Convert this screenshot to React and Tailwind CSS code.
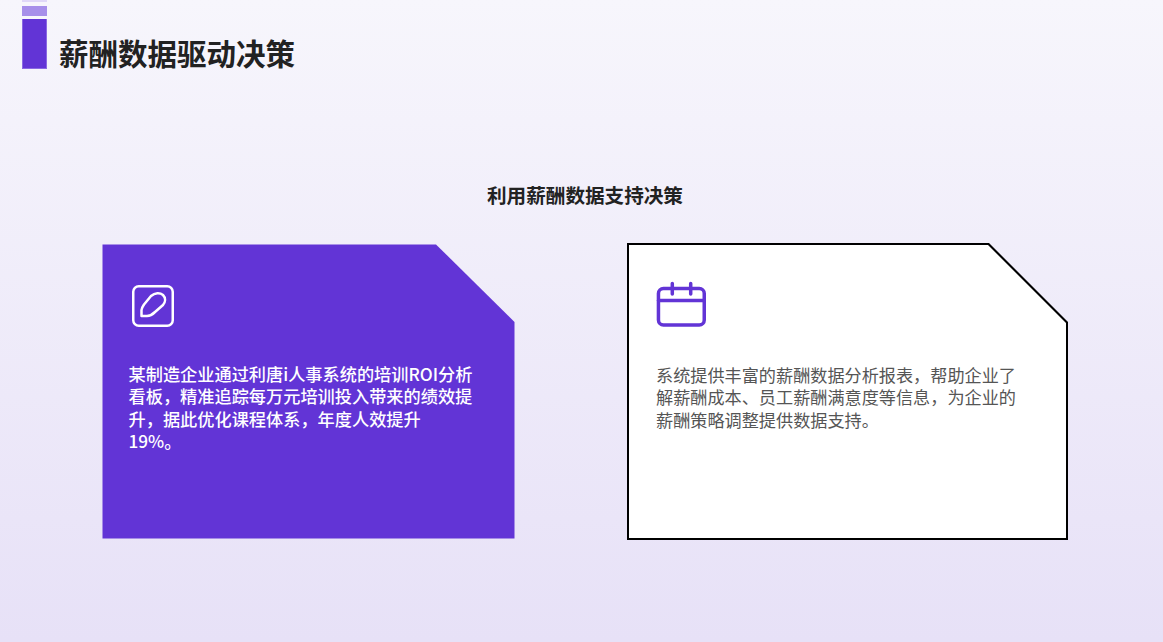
const CJK = "font-['Noto_Sans_CJK_SC','Noto_Sans',sans-serif]";

export default function App() {
  return (
    <div className={`${CJK} w-[1163px] h-[642px] overflow-hidden flex flex-col bg-gradient-to-b from-[#f7f6fc] to-[#e7e1f7]`}>
      <header className="flex items-start pl-[22px] h-[69px] gap-[12px]">
        <div className="flex flex-col w-[25px]">
          <div className="h-[2px] bg-[#e0d8f8]" />
          <div className="h-[10px] mt-[4px] bg-[#a78fea]" />
          <div className="h-[50px] mt-[3px] bg-[#6234d6] border-x border-b border-[#8a68e2]" />
        </div>
        <h1 className="mt-[31px] text-[29.5px] leading-[42px] font-bold text-[#222222]">薪酬数据驱动决策</h1>
      </header>
      <h2 className="mt-[112px] text-center ml-[7px] -translate-y-px text-[19.6px] leading-[30px] font-bold text-[#222222]">利用薪酬数据支持决策</h2>
      <main className="mt-[33px] flex pl-[102px] gap-[112px]">
        <section className="w-[413px] h-[295px] bg-[#6234d6] [clip-path:polygon(0.5px_0.4px,334px_0.4px,412.5px_78px,412.5px_294.6px,0.5px_294.6px)] pt-[40px] pl-[26.5px]">
          <svg width="44" height="44" viewBox="0 0 44 44" fill="none" stroke="#ffffff" strokeWidth="2.5" strokeLinejoin="round" strokeLinecap="round" className="ml-[2.5px]">
            <rect x="2.25" y="2.25" width="39.5" height="39.5" rx="5.5" />
            <path d="M10.5 32 L10.5 26 C10.5 24 12 22 13 20.5 L20 12 C24 8.5 29 8.5 32 11 C35 14 34.5 18 32 21 L24 28 C21 31 18 32 16 32 Z" />
          </svg>
          <p className="mt-[35px] w-[346px] text-[17.2px] leading-[22.3px] font-medium text-white">某制造企业通过利唐i人事系统的培训ROI分析看板，精准追踪每万元培训投入带来的绩效提升，据此优化课程体系，年度人效提升<br />19%。</p>
        </section>
        <section className="w-[441px] h-[297px] -mt-px bg-black p-[2px] [clip-path:polygon(0_0,362px_0,100%_79px,100%_100%,0_100%)]">
          <div className="w-full h-full bg-white [clip-path:polygon(0_0,359px_0,100%_78px,100%_100%,0_100%)] pt-[36px] pl-[27px]">
            <svg width="50" height="46" viewBox="0 0 50 46" fill="none" stroke="#6234d6" strokeWidth="3.5" strokeLinecap="round" strokeLinejoin="round">
              <rect x="2.45" y="7.45" width="45.8" height="36.5" rx="5" />
              <path d="M2.45 19.5 H48.25 M16.3 2.5 V13 M34.7 2.5 V13" />
            </svg>
            <p className="mt-[37px] w-[370px] text-[17.15px] leading-[22.3px] text-[#555555]">系统提供丰富的薪酬数据分析报表，帮助企业了解薪酬成本、员工薪酬满意度等信息，为企业的薪酬策略调整提供数据支持。</p>
          </div>
        </section>
      </main>
    </div>
  );
}
